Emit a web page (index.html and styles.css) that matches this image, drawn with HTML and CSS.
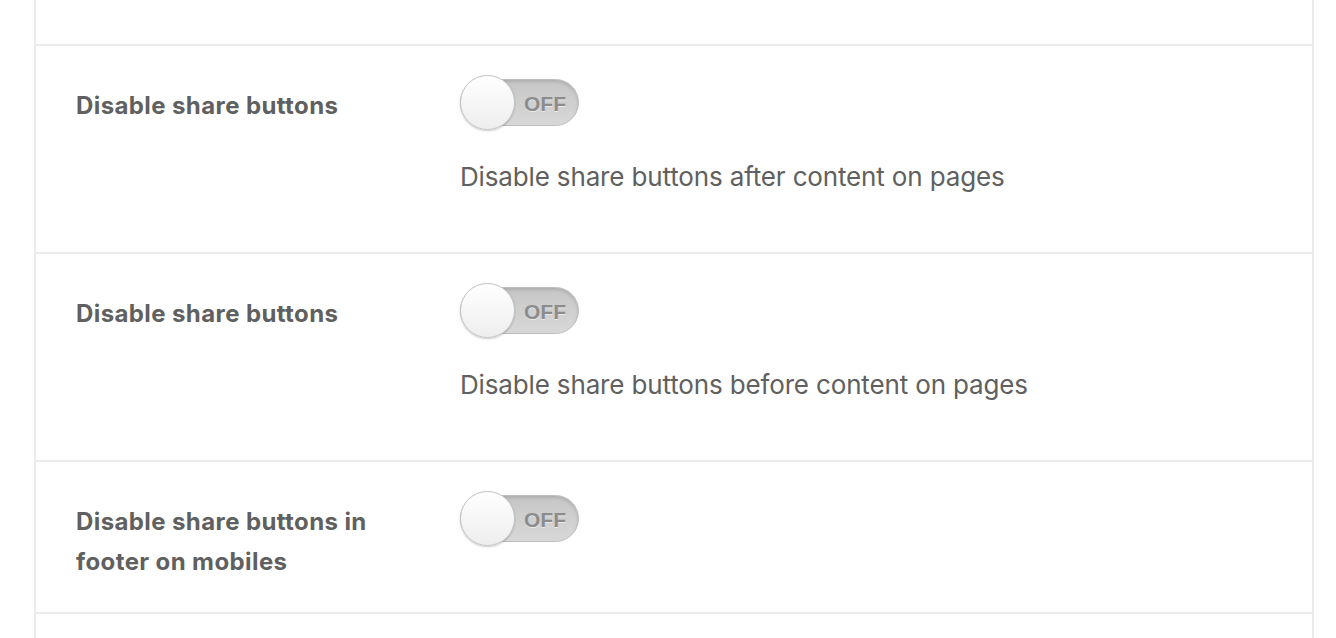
FILE: index.html
```html
<!DOCTYPE html>
<html lang="en">

<head>
    <meta charset="UTF-8">
    <meta name="viewport" content="width=device-width, initial-scale=1.0">
    <title>Share Settings</title>
    <link rel="stylesheet" href="styles.css">
</head>

<body>
    <div class="settings">
        <div class="previous"></div>
        <div class="row">
            <div class="label">Disable share buttons</div>
            <div class="field">
                <span class="switch">
                    <span class="track"><span class="state">OFF</span></span>
                    <span class="knob"></span>
                </span>
                <p class="description">Disable share buttons after content on pages</p>
            </div>
        </div>
        <div class="row">
            <div class="label">Disable share buttons</div>
            <div class="field">
                <span class="switch">
                    <span class="track"><span class="state">OFF</span></span>
                    <span class="knob"></span>
                </span>
                <p class="description">Disable share buttons before content on pages</p>
            </div>
        </div>
        <div class="row short">
            <div class="label">Disable share buttons in<br>footer on mobiles</div>
            <div class="field">
                <span class="switch">
                    <span class="track"><span class="state">OFF</span></span>
                    <span class="knob"></span>
                </span>
            </div>
        </div>
        <div class="next"></div>
    </div>
</body>

</html>
```

FILE: styles.css
```css
html,
body {
    margin: 0;
    background-color: #fff;
    font-family: Inter, "Open Sans", sans-serif;
    color: var(--text-color);
}

:root {
    --text-color: #606060;
    --border-color: #ebebeb;
    --muted-color: #8c8c8c;
}

.settings {
    margin-left: 34px;
    width: 1276px;
    border-left: 2px solid var(--border-color);
    border-right: 2px solid var(--border-color);
}

.previous {
    height: 44px;
}

.row {
    display: grid;
    grid-template-columns: 424px 1fr;
    align-items: start;
    border-top: 2px solid var(--border-color);
}

.row .label {
    padding: 40px 40px 30px;
    font-size: 24px;
    font-weight: 700;
    letter-spacing: 0.4px;
    line-height: 40px;
}

.row .field {
    padding: 29px 0 55px;
}

.row.short .field {
    padding-bottom: 0;
}

.switch {
    position: relative;
    display: flex;
    align-items: center;
    width: 119px;
    height: 55px;
}

.switch .track {
    display: flex;
    align-items: center;
    justify-content: flex-end;
    box-sizing: border-box;
    width: 119px;
    height: 47px;
    padding: 3px 12px 0 0;
    border-radius: 24px;
    border: 1px solid #bdbdbd;
    background: linear-gradient(#c6c6c6, #d8d8d8);
    box-shadow: inset 0 2px 3px rgba(0, 0, 0, 0.12);
}

.switch .state {
    font-family: "Liberation Sans", Arial, sans-serif;
    font-size: 21px;
    font-weight: 700;
    color: var(--muted-color);
    text-shadow: 0 1px 0 rgba(255, 255, 255, 0.5);
}

.switch .knob {
    position: absolute;
    left: 0;
    top: 0;
    box-sizing: border-box;
    width: 55px;
    height: 55px;
    border-radius: 50%;
    border: 1px solid #c4c4c4;
    background: linear-gradient(#fff, #eeeeee);
    box-shadow: 0 1px 2px rgba(0, 0, 0, 0.22);
}

.description {
    margin: 27px 0 0;
    font-size: 26px;
    letter-spacing: -0.15px;
    line-height: 40px;
}

.next {
    height: 24px;
    border-top: 2px solid var(--border-color);
}
```
